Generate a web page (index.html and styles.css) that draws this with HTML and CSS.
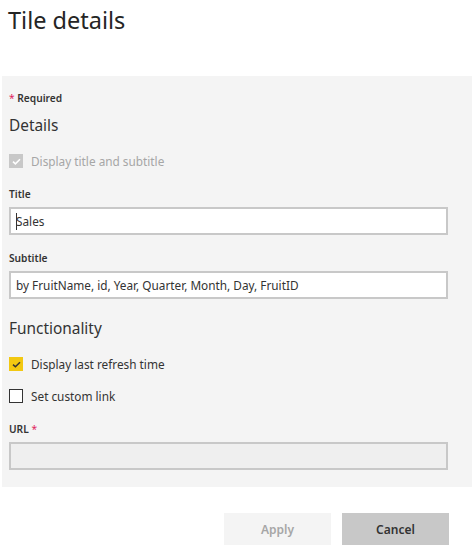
FILE: index.html
```html
<!DOCTYPE html>
<html>
<head>
<meta charset="utf-8">
<link rel="stylesheet" href="styles.css">
</head>
<body>
<div class="page">
  <h1 class="title">Tile details</h1>
  <div class="panel">
    <div class="required"><span class="star">*</span> Required</div>
    <h2 class="section">Details</h2>
    <div class="check disabled">
      <span class="box checked-gray">
        <svg width="9" height="7" viewBox="0 0 9 7"><path d="M1 3.6 L3.4 5.8 L8 1.2" fill="none" stroke="#fff" stroke-width="1.6"/></svg>
      </span>
      <span class="check-label">Display title and subtitle</span>
    </div>
    <div class="label">Title</div>
    <div class="input"><span class="caret"></span>Sales</div>
    <div class="label">Subtitle</div>
    <div class="input">by FruitName, id, Year, Quarter, Month, Day, FruitID</div>
    <h2 class="section">Functionality</h2>
    <div class="check">
      <span class="box checked-yellow">
        <svg width="9" height="7" viewBox="0 0 9 7"><path d="M1 3.6 L3.4 5.8 L8 1.2" fill="none" stroke="#333" stroke-width="1.5"/></svg>
      </span>
      <span class="check-label">Display last refresh time</span>
    </div>
    <div class="check">
      <span class="box empty"></span>
      <span class="check-label">Set custom link</span>
    </div>
    <div class="label">URL <span class="star">*</span></div>
    <div class="input disabled-input"></div>
  </div>
  <div class="buttons">
    <button class="btn apply">Apply</button>
    <button class="btn cancel">Cancel</button>
  </div>
</div>
</body>
</html>
```

FILE: styles.css
```css
* { box-sizing: border-box; }
html, body { margin: 0; padding: 0; background: #fff; }
body { font-family: "Noto Sans", "Open Sans", sans-serif; color: #333; }
.page { width: 474px; }
.title {
  margin: 0;
  padding: 4px 0 0 8px;
  height: 76px;
  font-size: 23.5px;
  font-weight: 400;
  color: #252525;
  line-height: 32px;
}
.panel {
  margin: 0 2px;
  background: #f4f4f4;
  padding: 14px 24px 17px 7px;
  height: 411px;
}
.required { font-size: 10.2px; font-weight: 600; color: #333; line-height: 16px; }
.star { color: #e0245e; font-weight: 400; }
.section {
  margin: 8px 0 0 0;
  font-size: 15.4px;
  font-weight: 400;
  line-height: 24px;
  color: #333;
}
.input + .section { margin-top: 18px; }
.check { display: flex; align-items: center; gap: 8px; margin-top: 10px; height: 16px; }
.section + .check { margin-top: 15px; }
.input + .section + .check { margin-top: 15px; }
.box {
  width: 14px; height: 14px; flex: none;
  display: flex; align-items: center; justify-content: center;
}
.checked-gray { background: #c8c8c8; }
.checked-yellow { background: #f2c811; }
.empty { border: 1px solid #333; background: #fff; }
.check-label { font-size: 11.8px; line-height: 16px; }
.disabled .check-label { color: #a6a6a6; }
.check + .check { margin-top: 16px; }
.label { font-size: 10.2px; font-weight: 600; margin-top: 15px; line-height: 16px; }
.check + .label { margin-top: 17px; }
.input {
  margin-top: 5px;
  height: 28px;
  border: 2px solid #c8c8c8;
  background: #fff;
  font-size: 11.8px;
  line-height: 24px;
  padding-left: 5px;
  display: flex;
  align-items: center;
}
.caret { width: 1px; height: 17px; background: #333; margin-right: -1px; }
.disabled-input { background: #efefef; border-color: #c8c8c8; }
.buttons {
  display: flex;
  justify-content: flex-end;
  gap: 11px;
  padding: 26px 25px 0 0;
}
.btn {
  width: 107px; height: 32px;
  border: none;
  font-family: "Noto Sans", "Open Sans", sans-serif;
  font-size: 12px;
  font-weight: 600;
}
.apply { background: #f4f4f4; color: #a6a6a6; }
.cancel { background: #c8c8c8; color: #333; }
```
